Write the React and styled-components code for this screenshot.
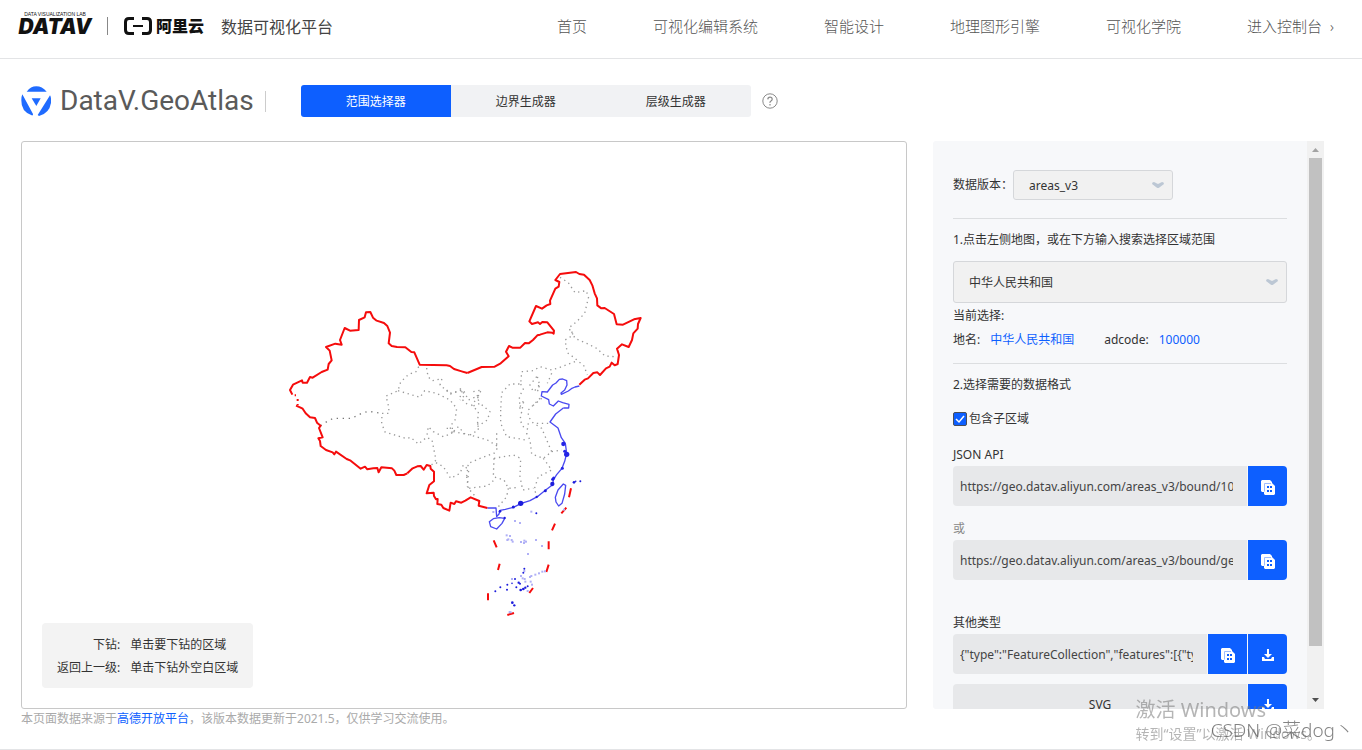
import { useState } from 'react';
import styled, { createGlobalStyle } from 'styled-components';

const GlobalStyle = createGlobalStyle`
  * { box-sizing: border-box; }
  body {
    margin: 0;
    background: #fff;
    color: #333;
    font-family: "Noto Sans", "Noto Sans CJK SC", sans-serif;
    font-size: 12px;
    line-height: 24px;
  }
  a { color: inherit; text-decoration: none; }
  button, input, select { font: inherit; color: inherit; }
`;

const Page = styled.div`
  display: flex;
  flex-direction: column;
  min-height: 100vh;
  border-bottom: 1px solid #e3e4e6;
`;

/* header */

const Header = styled.header`
  display: flex;
  align-items: center;
  justify-content: space-between;
  padding: 0 28px 6px 17px;
  height: 59px;
  border-bottom: 1px solid #e3e4e6;
`;

const Brand = styled.a`
  display: flex;
  align-items: center;
`;

const Lab = styled.span`
  display: flex;
  flex-direction: column;
  align-items: center;
  width: 76px;
  padding-bottom: 4px;
  color: #111;
`;

const LabCaption = styled.span`
  font: 5px/6px "Liberation Sans", sans-serif;
  white-space: nowrap;
`;

const LabName = styled.span`
  font: italic 900 21px/20px Inter, sans-serif;
`;

const BrandDivider = styled.span`
  width: 1px;
  height: 18px;
  margin: 0 16px 0 14px;
  background: #888;
`;

const CloudName = styled.span`
  margin: 0 17px 0 4px;
  font-size: 16px;
  font-weight: 900;
  color: #111;
`;

const Product = styled.span`
  padding-top: 2px;
  font-size: 16px;
  color: #444;
`;

const Nav = styled.nav`
  display: flex;
  gap: 66px;
  font-size: 15px;
  font-weight: 300;
  color: #555;
`;

const NavLink = styled.a`
  display: flex;
  align-items: center;
  gap: 8px;
  white-space: nowrap;
`;

/* title bar */

const TitleBar = styled.div`
  display: flex;
  align-items: center;
  padding: 26px 21px 24px;
`;

const AtlasName = styled.h1`
  margin: 0 0 0 9px;
  font: 400 28px/32px Roboto, sans-serif;
  color: #5a5a5a;
`;

const TitleDivider = styled.span`
  width: 1px;
  height: 21px;
  margin: 0 35px 0 11px;
  background: #ccc;
`;

const Tabs = styled.div`
  display: flex;
  border-radius: 3px;
  overflow: hidden;
`;

const Tab = styled.button`
  width: 150px;
  height: 32px;
  padding: 1px 0 0;
  border: 0;
  background: ${(props) => (props.$active ? '#0d5fff' : '#f1f2f4')};
  color: ${(props) => (props.$active ? '#fff' : '#333')};
  cursor: pointer;
`;

const Help = styled.button`
  display: flex;
  margin-left: 11px;
  padding: 0;
  border: 0;
  background: none;
`;

/* content */

const Main = styled.main`
  display: flex;
  gap: 26px;
  height: calc(100vh - 182px);
  padding: 0 38px 0 21px;
`;

const MapCard = styled.section`
  position: relative;
  flex: 1;
  min-width: 0;
  border: 1px solid #c8c8c8;
  border-radius: 3px;
`;

const MapSvg = styled.svg`
  display: block;
  width: 100%;
  height: 100%;
  fill: none;
`;

const Legend = styled.dl`
  position: absolute;
  left: 20px;
  bottom: 20px;
  display: grid;
  grid-template-columns: auto auto;
  column-gap: 10px;
  margin: 0;
  padding: 10px 15px 9px;
  border-radius: 4px;
  background: #f3f3f3;
  line-height: 23px;
  dt { text-align: right; }
  dd { margin: 0; }
`;

const Panel = styled.aside`
  display: flex;
  width: 391px;
  border-radius: 3px 0 0 3px;
  background: #f7f8fa;
  overflow: hidden;
`;

const PanelBody = styled.div`
  flex: 1;
  min-width: 0;
  padding: 29px 20px 0;
  overflow: hidden;
`;

const Section = styled.section`
  padding-bottom: ${(props) => props.$bottom}px;
  margin-bottom: 9px;
  border-bottom: 1px solid #dcdee0;
`;

const Line = styled.div`
  display: flex;
  align-items: center;
`;

const Text = styled.p`
  margin: 0;
`;

const Blue = styled.span`
  margin: 0 30px 0 10px;
  color: #0d5fff;
`;

const SelectBox = styled.div`
  position: relative;
  width: ${(props) => props.$width || '100%'};
  margin: ${(props) => props.$gap || '0'};
  svg {
    position: absolute;
    right: 9px;
    top: 50%;
    margin-top: -3px;
    pointer-events: none;
  }
`;

const Select = styled.select`
  display: block;
  appearance: none;
  width: 100%;
  height: ${(props) => props.$height}px;
  padding: 2px 15px 0;
  border: 1px solid #d5d7da;
  border-radius: 3px;
  background: #f1f1f1;
`;

const CheckLabel = styled.label`
  display: flex;
  align-items: center;
  gap: 2px;
  margin-top: 10px;
`;

const Checkbox = styled.input`
  appearance: none;
  width: 14px;
  height: 14px;
  margin: 0;
  border: 1px solid #4a4f59;
  border-radius: 2px;
  background: #fff;
  &:checked {
    background: #0d5fff;
  }
`;

const CheckWrap = styled.span`
  position: relative;
  display: flex;
  svg {
    position: absolute;
    inset: 0;
    pointer-events: none;
  }
`;

const FieldLabel = styled.label`
  display: block;
  margin-top: ${(props) => props.$top}px;
  color: ${(props) => (props.$muted ? '#888' : 'inherit')};
`;

const Field = styled.div`
  display: flex;
  gap: 1px;
  height: 40px;
  margin: -1px 0 10px;
  border-radius: 4px;
  overflow: hidden;
  & + & { margin-top: 0; }
`;

const FieldInput = styled.input`
  flex: 1;
  min-width: 0;
  padding: 2px 14px 0 7px;
  border: 0;
  background: #e7e8ea;
  color: #444;
`;

const FieldName = styled.span`
  flex: 1;
  padding-top: 1px;
  background: #e7e8ea;
  line-height: 40px;
  text-align: center;
`;

const FieldButton = styled.button`
  display: flex;
  align-items: center;
  justify-content: center;
  width: 39px;
  padding: 2px 0 0;
  border: 0;
  background: #0d5fff;
  color: #fff;
`;

const ScrollTrack = styled.div`
  display: flex;
  flex-direction: column;
  align-items: center;
  width: 17px;
  background: #f1f1f1;
`;

const ScrollThumb = styled.div`
  flex: 1;
  width: 13px;
  margin-bottom: 46px;
  background: #c1c1c1;
`;

const ScrollArrow = styled.svg`
  width: 17px;
  height: 17px;
  fill: ${(props) => props.$fill};
`;

const Source = styled.footer`
  padding: 0 21px;
  line-height: 20px;
  color: #aaa;
  a { color: #0d5fff; }
`;

/* overlay marks in the lower right corner */

const Activate = styled.div`
  position: fixed;
  right: 41px;
  bottom: 5px;
  color: rgba(120, 120, 120, 0.55);
  font-size: 14px;
  line-height: 22px;
  white-space: nowrap;
  pointer-events: none;
  strong {
    display: block;
    font-size: 20px;
    font-weight: 400;
    line-height: 26px;
  }
`;

const Author = styled.div`
  position: fixed;
  right: 8px;
  bottom: 7px;
  color: rgba(90, 90, 90, 0.75);
  font-size: 19px;
  font-weight: 300;
  line-height: 26px;
  white-space: nowrap;
  pointer-events: none;
`;

const Chevron = () => (
  <svg width="12" height="6" viewBox="0 0 12 6">
    <path d="M0 2Q0 0 2 0L6 2 10 0Q12 0 12 2L7 5.700Q6 6.200 5 5.700Z" fill="#bcc7d4" />
  </svg>
);

const CopyIcon = () => (
  <svg width="14" height="15" viewBox="0 0 14 15">
    <path d="M1 0h8l2 2v2H4v8H1l-1-1V1z" fill="#fff" />
    <path d="M4 3h7l3 3v8l-1 1H4l-1-1V4z" fill="#fff" />
    <path d="M3.500 11.500V3.500H10" fill="none" stroke="#9dbcff" strokeWidth="1" />
    <path d="M6 6h2v2H6zM9 6h2v2H9zM6 10h2v2H6zM9 10h2v2H9z" fill="#0d5fff" />
  </svg>
);

const DownloadIcon = () => (
  <svg width="14" height="14" viewBox="0 0 14 14" fill="#fff">
    <path d="M6 1h2v5h3L7 10 3 6h3z" />
    <path d="M1 9h2l1 2h6l1-2h2v4H1z" />
  </svg>
);

const AtlasMark = () => (
  <svg width="30" height="30" viewBox="62 255 90 90" fill="#1f6bff">
    <path d="M79 272Q91 256 108 256T139 272Z" />
    <path d="M66 280L98 339Q99 344 94 343Q62 332 63 298Q63 286 66 280Z" />
    <path d="M149 283Q154 292 152 306Q147 337 116 345L112 342Z" />
    <path d="M94 292H121L108 315Z" />
  </svg>
);

// outlines are stored in map units, three to a pixel
const LAND = [
  [0, 0, 'M37 404L30 390 39 374 66 361 68 368 81 368 90 351 98 353 125 336 143 329 146 312 155 301 149 272 138 261 166 251 185 254 180 240 194 204 210 212 236 210 237 180 254 172 258 157 271 156 279 173 290 182 312 189 322 198 330 218 326 250 335 258 351 261 376 262 394 276 403 277 419 314 500 316 510 318 522 327 545 334 562 339'],
  [540, 0, 'M22 339L65 321 104 320 122 310 146 289 138 275 147 258 157 263 181 263 195 249 206 250 219 240 232 226 240 224 262 217 277 218 281 221 282 212 262 187 247 186 240 192 234 187 216 192 208 184 228 138 246 146 260 136 271 132 270 122 286 86 296 80 298 66 286 60 300 42 348 36 358 42 372 44 389 60 397 76 404 100 411 115 412 136 424 145 434 144 462 162 470 193 489 194 522 178 542 174 534 192 533 206 520 220 516 240 506 261 486 253 471 266 477 285 473 312 464 316 455 308 449 320 438 325 420 345 412 337 400 339 384 355 374 359 358 374'],
  [0, 0, 'M48 437L60 442 68 446 77 460 90 472 105 474 111 488 122 497 117 504 128 532 115 535 120 543 122 558 138 570 158 577 163 583 168 575 200 597 212 602 242 626 255 620 262 628 280 625 292 624 296 637 304 622 336 625 343 632 349 645 371 645 382 640'],
  [0, 0, 'M44 406h4M53 417v6M53 432v4'],
  [360, 360, 'M22 280L38 265 52 259 62 258 71 269 80 255 91 258 92 266 102 275 102 304 88 315 80 340 101 338 102 348 108 358 113 357 112 372 124 374 130 384 148 392 152 368 163 372 168 364 184 368 196 362 212 352 238 363 236 377 262 384'],
];

const COAST = [
  [540, 0, 'M358 378L345 381 334 386 325 393 304 403 303 399 314 390 321 375 320 362 308 357 298 358 288 369 278 375 262 396 246 395 244 408 266 419 268 432 280 438 295 423 308 428 327 433 326 444 310 444'],
  [360, 360, 'M490 84L467 102 450 126 474 144 484 173 496 190 500 220 494 244 486 265 470 284 460 300 458 314 436 331 412 350 390 362 364 370 340 382 316 388 300 391 297 402 290 410 288 384 262 384'],
  [570, 630, 'M88 143L104 145 96 160 80 177 62 170 58 155 70 146Z'],
  [570, 630, 'M287 46L280 42 264 60 256 82 258 96 266 108 276 100 284 72Z'],
];

const NINE_DASH = 'M71 211L80 232M89 281L84 300M54 370V391M112 435L132 429M189 354L178 369M236 284L229 306M236 214V238M255 161L246 181M289 113L274 130M303 55L297 82';

const PROVINCES = [
  [0, 0, 'M416 320L408 335 385 344 362 366 354 392 318 408 326 440 327 460 306 460 305 490 315 516 380 536 392 532 415 552 440 532 456 540 468 600 452 618'],
  [0, 0, 'M440 324L444 350 456 362 486 356 480 375 512 402 548 388 540 412 565 436'],
  [0, 0, 'M354 392L420 412 434 392 470 400 510 420 530 445 525 480 510 500 515 520 490 530 460 515 445 500 440 532'],
  [0, 0, 'M500 505L520 505 515 520 535 500 560 528M468 608L490 620 512 655 540 640 550 615 566 630 562 680'],
  [540, 0, 'M300 52L325 68 345 98 378 92 386 110 374 160 350 185 326 204 340 225 315 240 322 278 345 295 372 318 382 345'],
  [540, 0, 'M335 215L345 235 380 250 410 265 435 288 465 290'],
  [540, 0, 'M345 305L300 322 275 330 240 320 220 332 185 335 182 372 150 372 125 398 122 450M182 372L190 388 178 410 180 450'],
  [540, 0, 'M275 340L262 370M230 350L210 375 220 395 240 378 232 350M236 375L232 400M245 415L215 440'],
  [540, 0, 'M0 385L15 405 0 420M40 395L65 390 50 410 60 430 35 440'],
  [360, 360, 'M140 30L150 40 190 30 205 60 240 45 215 75 235 95 232 140 262 120 270 95 240 70'],
  [360, 360, 'M160 155L210 165 262 180 295 200 282 220 240 235 205 250 200 290M210 165L235 150 232 120'],
  [360, 360, 'M302 90L302 130 320 170 350 175 375 180M360 80L372 60 360 120 375 150'],
  [360, 360, 'M420 55L385 90 385 110 400 130 448 130M385 130L380 160 390 180 395 222 430 235 455 215 440 180 425 145 405 132'],
  [360, 360, 'M290 160V200M282 235L340 225 362 235 360 290 368 330 400 325M282 235L280 290 312 300 325 325 355 322'],
  [360, 360, 'M280 302L262 318 205 325 225 348M325 325L320 350 292 384M430 235L455 270 415 290 402 330 415 350M455 215L485 210'],
  [360, 360, 'M200 290L205 325'],
];

const ROAD = 'M122 497L142 484 160 475 215 475 245 460 265 454 306 460';

// [x, y, size]
const ISLETS = [
  [163, 296, 6], [160, 308, 6], [126, 340, 5], [112, 344, 6], [91, 352, 6], [76, 364, 6], [146, 338, 7],
  [150, 341, 6], [139, 352, 6], [152, 360, 8], [160, 357, 8], [166, 353, 7], [173, 349, 6], [135, 327, 6],
  [111, 359, 6], [127, 398, 8], [133, 406, 7], [199, 130, 6], [312, 37, 8], [331, 34, 6], [317, 34, 5],
  [90, 124, 8], [104, 144, 7], [152, 100, 16], [130, 111, 9], [200, 81, 7], [247, 42, 13], [248, 28, 9], [226, 62, 9],
];

const FAINT_ISLETS = [
  [184, 125], [135, 153], [150, 159], [110, 196], [120, 198], [115, 208], [125, 210], [112, 210], [128, 215],
  [153, 216], [163, 212], [162, 219], [168, 215], [198, 210], [216, 228], [174, 252], [180, 321], [184, 318],
  [196, 314], [207, 310], [217, 305], [225, 304], [153, 318], [164, 327], [166, 335], [158, 325], [182, 335],
  [186, 344], [173, 363], [122, 427], [119, 426], [126, 327], [163, 303], [70, 126], [282, 119],
];

const COAST_SPOTS = [[490, 192, 13], [500, 223, 16], [487, 265, 9], [461, 294, 9], [494, 214, 9]];

const Outline = ({ list }) => list.map(([x, y, d]) => (
  <path key={d} d={d} transform={`translate(${x} ${y})`} />
));

const ChinaMap = () => (
  <MapSvg viewBox="-774 -354 2652 1698" role="img" aria-label="中华人民共和国" strokeLinejoin="round">
    <g stroke="#999" strokeWidth="4" strokeDasharray="4 11">
      <Outline list={PROVINCES} />
    </g>
    <path d={ROAD} stroke="#777" strokeWidth="4" strokeDasharray="4 14" />
    <g stroke="#4a4af0" strokeWidth="4">
      <Outline list={COAST} />
    </g>
    <g stroke="#f50c0c" strokeWidth="6">
      <Outline list={LAND} />
      <path d={NINE_DASH} transform="translate(570 630)" />
    </g>
    <g transform="translate(570 630)" fill="#1c1cdc">
      {ISLETS.map(([x, y, s]) => <circle key={`${x}-${y}`} cx={x} cy={y} r={s / 2} />)}
    </g>
    <g transform="translate(360 360)" fill="#2424e6">
      {COAST_SPOTS.map(([x, y, s]) => <circle key={x} cx={x} cy={y} r={s / 2} />)}
    </g>
    <g transform="translate(570 630)" fill="#b0b0f6">
      {FAINT_ISLETS.map(([x, y]) => <rect key={`${x}-${y}`} x={x - 3} y={y - 3} width="6" height="6" />)}
    </g>
  </MapSvg>
);

const links = ['首页', '可视化编辑系统', '智能设计', '地理图形引擎', '可视化学院'];
const tabs = ['范围选择器', '边界生成器', '层级生成器'];

const App = () => {
  const [tab, setTab] = useState(tabs[0]);
  const [children, setChildren] = useState(true);

  return (
    <Page>
      <GlobalStyle />
      <Header>
        <Brand href="#">
          <Lab>
            <LabCaption>DATA VISUALIZATION LAB</LabCaption>
            <LabName>DATAV</LabName>
          </Lab>
          <BrandDivider />
          <svg width="28" height="18" viewBox="0 0 28 18" fill="none" stroke="#111" strokeWidth="3">
            <path d="M10 1.500H5Q1.500 1.500 1.500 5v8q0 3.500 3.500 3.500h5" />
            <path d="M18 1.500h5q3.500 0 3.500 3.500v8q0 3.500-3.500 3.500h-5" />
            <path d="M9 9h10" strokeWidth="2" />
          </svg>
          <CloudName>阿里云</CloudName>
          <Product>数据可视化平台</Product>
        </Brand>
        <Nav>
          {links.map((name) => <NavLink href="#" key={name}>{name}</NavLink>)}
          <NavLink href="#">进入控制台<span>›</span></NavLink>
        </Nav>
      </Header>

      <TitleBar>
        <AtlasMark />
        <AtlasName>DataV.GeoAtlas</AtlasName>
        <TitleDivider />
        <Tabs>
          {tabs.map((name) => (
            <Tab key={name} $active={name === tab} onClick={() => setTab(name)}>{name}</Tab>
          ))}
        </Tabs>
        <Help aria-label="帮助">
          <svg width="16" height="16" viewBox="0 0 16 16" fill="none" stroke="#8a8a8a">
            <circle cx="8" cy="8" r="7.200" />
            <path d="M5.800 6.400Q5.900 4.200 8 4.200T10.200 6.200Q10.200 7.200 9 7.900T8 9.800M8 11v1.400" strokeWidth="1.200" />
          </svg>
        </Help>
      </TitleBar>

      <Main>
        <MapCard>
          <ChinaMap />
          <Legend>
            <dt>下钻:</dt>
            <dd>单击要下钻的区域</dd>
            <dt>返回上一级:</dt>
            <dd>单击下钻外空白区域</dd>
          </Legend>
        </MapCard>

        <Panel>
          <PanelBody>
            <Section $bottom={18}>
              <Line>
                <label htmlFor="version">数据版本：</label>
                <SelectBox $width="160px">
                  <Select id="version" $height={30}>
                    <option>areas_v3</option>
                  </Select>
                  <Chevron />
                </SelectBox>
              </Line>
            </Section>
            <Section $bottom={11}>
              <label htmlFor="area">1.点击左侧地图，或在下方输入搜索选择区域范围</label>
              <SelectBox $gap="9px 0 1px">
                <Select id="area" $height={42}>
                  <option>中华人民共和国</option>
                </Select>
                <Chevron />
              </SelectBox>
              <Text>当前选择:</Text>
              <Line>
                地名:<Blue>中华人民共和国</Blue>adcode:<Blue>100000</Blue>
              </Line>
            </Section>
            <Text>2.选择需要的数据格式</Text>
            <CheckLabel>
              <CheckWrap>
                <Checkbox type="checkbox" checked={children} onChange={(e) => setChildren(e.target.checked)} />
                {children && (
                  <svg width="14" height="14" viewBox="0 0 14 14" fill="none" stroke="#fff" strokeWidth="1.500">
                    <path d="M3 7l3 3 5-6" />
                  </svg>
                )}
              </CheckWrap>
              包含子区域
            </CheckLabel>
            <FieldLabel htmlFor="api" $top={12}>JSON API</FieldLabel>
            <Field>
              <FieldInput id="api" readOnly value="https://geo.datav.aliyun.com/areas_v3/bound/100000_full.json" />
              <FieldButton aria-label="复制"><CopyIcon /></FieldButton>
            </Field>
            <FieldLabel htmlFor="geojson" $top={11} $muted>或</FieldLabel>
            <Field>
              <FieldInput id="geojson" readOnly value="https://geo.datav.aliyun.com/areas_v3/bound/geojson?code=100000_full" />
              <FieldButton aria-label="复制"><CopyIcon /></FieldButton>
            </Field>
            <FieldLabel htmlFor="other" $top={31}>其他类型</FieldLabel>
            <Field>
              <FieldInput id="other" readOnly value={'{"type":"FeatureCollection","features":[{"type":"Feature"}]}'} />
              <FieldButton aria-label="复制"><CopyIcon /></FieldButton>
              <FieldButton aria-label="下载"><DownloadIcon /></FieldButton>
            </Field>
            <Field>
              <FieldName>SVG</FieldName>
              <FieldButton aria-label="下载"><DownloadIcon /></FieldButton>
            </Field>
          </PanelBody>
          <ScrollTrack>
            <ScrollArrow viewBox="0 0 17 17" $fill="#a3a3a3"><path d="M5 11h7L8.500 7z" /></ScrollArrow>
            <ScrollThumb />
            <ScrollArrow viewBox="0 0 17 17" $fill="#505050"><path d="M5 6h7l-3.500 4z" /></ScrollArrow>
          </ScrollTrack>
        </Panel>
      </Main>

      <Source>
        本页面数据来源于<a href="#">高德开放平台</a>，该版本数据更新于2021.5，仅供学习交流使用。
      </Source>

      <Activate>
        <strong>激活 Windows</strong>
        转到“设置”以激活 Windows。
      </Activate>
      <Author>CSDN @菜dog丶</Author>
    </Page>
  );
};

export default App;
